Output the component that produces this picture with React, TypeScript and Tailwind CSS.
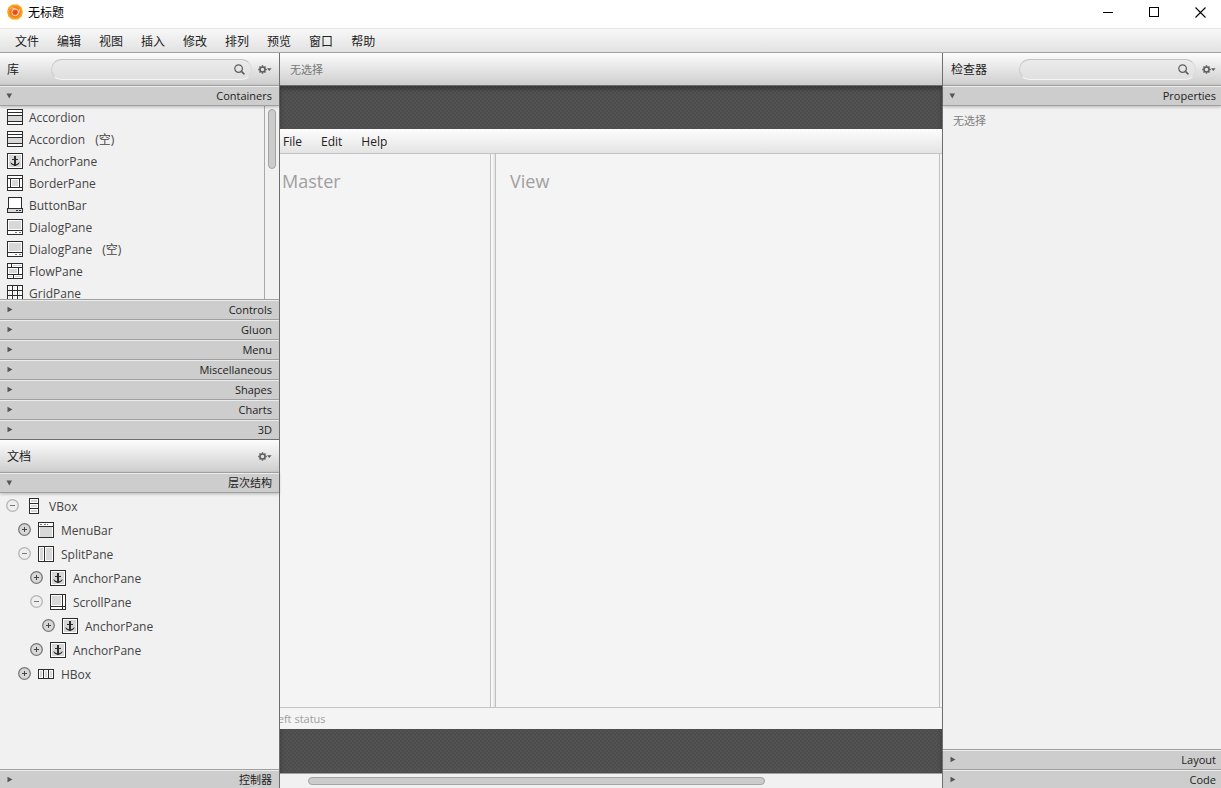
import type { ReactNode } from 'react';

type IconName =
  | 'accordion'
  | 'anchor'
  | 'border'
  | 'buttonbar'
  | 'dialog'
  | 'flow'
  | 'grid'
  | 'vbox'
  | 'hbox'
  | 'menubar'
  | 'split'
  | 'scroll';

const INK = '#2c2c2c';
const SHADE = '#d8d8d8';

function Frame({ children }: { children?: ReactNode }) {
  return (
    <>
      <rect x="0.5" y="0.5" width="15" height="15" fill="#ffffff" stroke={INK} />
      {children}
    </>
  );
}

const ICONS: Record<IconName, ReactNode> = {
  accordion: (
    <Frame>
      <rect x="1" y="7" width="14" height="5" fill={SHADE} />
      <path d="M1 3.5h14M1 6.5h14M1 12.5h14" stroke={INK} />
    </Frame>
  ),
  anchor: (
    <Frame>
      <rect x="2" y="2" width="12" height="12" fill={SHADE} />
      <rect x="7" y="3" width="2" height="10" fill={INK} />
      <path d="M5 6.5h6" stroke={INK} />
      <path
        d="M3.4 9C3.8 11.6 5.6 12.6 8 12.6S12.2 11.6 12.6 9L11 10.2C10.4 11 9.4 11.3 8 11.3S5.6 11 5 10.2Z"
        fill={INK}
        shapeRendering="geometricPrecision"
      />
    </Frame>
  ),
  border: (
    <Frame>
      <rect x="5" y="5" width="6" height="6" fill={SHADE} />
      <path d="M1 3.5h14M1 12.5h14M3.5 4v8M12.5 4v8" stroke={INK} />
    </Frame>
  ),
  buttonbar: (
    <>
      <rect x="1.5" y="0.5" width="13" height="11" fill="#ffffff" stroke={INK} />
      <rect x="0.5" y="11.5" width="15" height="4" fill={SHADE} stroke={INK} />
      <path d="M9 13.5h2M12 13.5h2" stroke={INK} />
    </>
  ),
  dialog: (
    <Frame>
      <rect x="2" y="2" width="12" height="8" fill={SHADE} />
      <path d="M1 11.5h14" stroke={INK} />
      <path d="M8 13.5h2M12 13.5h2" stroke="#777777" />
    </Frame>
  ),
  flow: (
    <Frame>
      <rect x="2" y="6" width="8" height="4" fill={SHADE} />
      <path d="M6 2.5h8M2 13.5h3M8 13.5h6" stroke={SHADE} />
      <path d="M1 4.5h14M1 11.5h14M4.5 1v3M11.5 5v6M6.5 12v3" stroke={INK} />
    </Frame>
  ),
  grid: (
    <Frame>
      <path d="M2.5 1v14M7.5 1v14M12.5 1v14" stroke="#e4e9e0" />
      <path d="M5.5 0v16M10.5 0v16M0 5.5h16M0 10.5h16" stroke={INK} />
    </Frame>
  ),
  vbox: (
    <>
      <rect x="3.5" y="0.5" width="9" height="15" fill="#ffffff" stroke={INK} />
      <path d="M5 3h6M5 8h6M5 13h6" stroke={SHADE} strokeWidth="2" />
      <path d="M4 5.5h8M4 10.5h8" stroke={INK} />
    </>
  ),
  hbox: (
    <>
      <rect x="0.5" y="3.5" width="15" height="9" fill="#ffffff" stroke={INK} />
      <path d="M3 5v6M8 5v6M13 5v6" stroke={SHADE} strokeWidth="2" />
      <path d="M5.5 4v8M10.5 4v8" stroke={INK} />
    </>
  ),
  menubar: (
    <Frame>
      <rect x="2" y="5" width="12" height="10" fill={SHADE} />
      <path d="M1 4.5h14" stroke={INK} />
      <path d="M2 2.5h2M6 2.5h2M9 2.5h1" stroke="#777777" />
    </Frame>
  ),
  split: (
    <Frame>
      <rect x="2" y="2" width="3" height="12" fill={SHADE} />
      <rect x="8" y="2" width="6" height="12" fill={SHADE} />
      <path d="M6.5 1v14" stroke={INK} />
    </Frame>
  ),
  scroll: (
    <Frame>
      <rect x="2" y="2" width="9" height="9" fill={SHADE} />
      <path d="M12.5 1v14M1 12.5h14" stroke={INK} />
    </Frame>
  ),
};

function NodeIcon({ name }: { name: IconName }) {
  return (
    <svg className="size-4 shrink-0" viewBox="0 0 16 16" shapeRendering="crispEdges" aria-hidden="true">
      {ICONS[name]}
    </svg>
  );
}

function AppLogo() {
  return (
    <svg className="size-4" viewBox="0 0 16 16" aria-hidden="true">
      <path d="M5.2 0.4H10.8L14.6 3.2L15.9 8L14.6 12.8L10.8 15.6H5.2L1.4 12.8L0.1 8L1.4 3.2Z" fill="#f9a61a" />
      <circle cx="8" cy="8" r="6" fill="#f58220" />
      <circle cx="8.2" cy="8.3" r="3.4" fill="#f26522" stroke="#fbd3b0" strokeWidth="1" />
      <path d="M3.4 4.2C5 3.6 7 4.2 9 5.6M12.6 5.2C12.4 7 11.8 9 10 11" fill="none" stroke="#fbd3b0" strokeWidth="1" />
      <circle cx="8.2" cy="8.3" r="1.9" fill="#ef4423" />
    </svg>
  );
}

function GearMenu({ label }: { label: string }) {
  return (
    <button type="button" aria-label={label} className="flex h-4 w-[14px] shrink-0 items-center">
      <svg className="h-[9px] w-[14px]" viewBox="0 0 14 9" aria-hidden="true">
        <circle cx="4.5" cy="4.5" r="2.5" fill="none" stroke="#5c5c5c" strokeWidth="1.5" />
        <path
          d="M4.5 0.2V1.8M4.5 7.2V8.8M0.2 4.5H1.8M7.2 4.5H8.8M1.5 1.5L2.5 2.5M6.5 6.5L7.5 7.5M1.5 7.5L2.5 6.5M6.5 2.5L7.5 1.5"
          stroke="#5c5c5c"
          strokeWidth="1.4"
        />
        <path d="M9 3.2H13.6L11.3 6Z" fill="#5c5c5c" />
      </svg>
    </button>
  );
}

function SearchBox({ label }: { label: string }) {
  return (
    <label className="flex h-[21px] min-w-0 flex-1 items-center rounded-full border border-t-[#c2c2c2] border-r-[#dadada] border-b-[#f4f4f4] border-l-[#cccccc] bg-linear-to-b from-[#ebebeb] to-[#dfdfdf] pr-[6px] pl-3">
      <input type="text" aria-label={label} className="min-w-0 flex-1 bg-transparent text-xs outline-none" />
      <svg className="size-[11px] shrink-0" viewBox="0 0 11 11" fill="none" stroke="#5c5c5c" aria-hidden="true">
        <circle cx="4.6" cy="4.6" r="3.8" strokeWidth="1.2" />
        <path d="M7.4 7.4L10.4 10.4" strokeWidth="1.5" />
      </svg>
    </label>
  );
}

const toolbar = 'flex h-8 shrink-0 items-center bg-linear-to-b from-[#fdfdfd] to-[#cecece]';

function SectionHeader({ title, open = false, inset = 'pr-[7px]' }: { title: string; open?: boolean; inset?: string }) {
  return (
    <button
      type="button"
      aria-expanded={open}
      className={`relative flex w-full shrink-0 items-center justify-between border-t border-t-[#a0a0a0] bg-[#cdcdcd] pl-[6px] text-[11px] leading-[18px] text-[#222222] ${inset} ${
        open ? 'h-[21px] border-b border-b-[#a0a0a0] shadow-[inset_0_1px_0_#ececec,0_1px_3px_rgba(0,0,0,0.25)]' : 'h-5 shadow-[inset_0_1px_0_#ececec]'
      }`}
    >
      <svg className="size-[7px]" viewBox="0 0 7 7" fill="#555555" aria-hidden="true">
        {open ? <path d="M0.5 1.5H6L3.3 6.5Z" /> : <path d="M1.5 0.8V6.2L6.5 3.5Z" />}
      </svg>
      <span>{title}</span>
    </button>
  );
}

const MENUS = ['文件', '编辑', '视图', '插入', '修改', '排列', '预览', '窗口', '帮助'];

const LIBRARY: { icon: IconName; label: string; empty?: boolean }[] = [
  { icon: 'accordion', label: 'Accordion' },
  { icon: 'accordion', label: 'Accordion', empty: true },
  { icon: 'anchor', label: 'AnchorPane' },
  { icon: 'border', label: 'BorderPane' },
  { icon: 'buttonbar', label: 'ButtonBar' },
  { icon: 'dialog', label: 'DialogPane' },
  { icon: 'dialog', label: 'DialogPane', empty: true },
  { icon: 'flow', label: 'FlowPane' },
  { icon: 'grid', label: 'GridPane' },
];

const LIBRARY_SECTIONS = ['Controls', 'Gluon', 'Menu', 'Miscellaneous', 'Shapes', 'Charts', '3D'];

const LEVEL = ['pl-[6px]', 'pl-[18px]', 'pl-[30px]', 'pl-[42px]'];

const TREE: { level: number; icon: IconName; label: string; open: boolean }[] = [
  { level: 0, icon: 'vbox', label: 'VBox', open: true },
  { level: 1, icon: 'menubar', label: 'MenuBar', open: false },
  { level: 1, icon: 'split', label: 'SplitPane', open: true },
  { level: 2, icon: 'anchor', label: 'AnchorPane', open: false },
  { level: 2, icon: 'scroll', label: 'ScrollPane', open: true },
  { level: 3, icon: 'anchor', label: 'AnchorPane', open: false },
  { level: 2, icon: 'anchor', label: 'AnchorPane', open: false },
  { level: 1, icon: 'hbox', label: 'HBox', open: false },
];

function TitleBar() {
  const control = 'flex w-[46px] items-center justify-center';
  return (
    <header className="flex h-7 shrink-0 bg-white">
      <div className="flex h-6 flex-1 items-center gap-[5px] pl-[7px] text-black">
        <AppLogo />
        <h1 className="pt-[2px]">无标题</h1>
      </div>
      <div className="-mr-[2px] flex h-6">
        <button type="button" aria-label="最小化" className={control}>
          <svg className="size-[11px]" viewBox="0 0 11 11" aria-hidden="true">
            <path d="M0 5.5H10" stroke="#000000" />
          </svg>
        </button>
        <button type="button" aria-label="最大化" className={control}>
          <svg className="size-[11px]" viewBox="0 0 11 11" aria-hidden="true">
            <path d="M0.5 0.5H9.5V9.5H0.5Z" fill="none" stroke="#000000" shapeRendering="crispEdges" />
          </svg>
        </button>
        <button type="button" aria-label="关闭" className={control}>
          <svg className="size-[11px]" viewBox="0 0 11 11" aria-hidden="true">
            <path d="M0.5 0.5L10.5 10.5M10.5 0.5L0.5 10.5" stroke="#000000" strokeWidth="1.1" />
          </svg>
        </button>
      </div>
    </header>
  );
}

function LibraryPanel() {
  return (
    <section className="flex min-h-0 flex-[387] basis-0 flex-col">
      <div className={`${toolbar} gap-[6px] pr-[7px] pl-[7px]`}>
        <h2 className="w-[38px] pt-[2px] text-[#222222]">库</h2>
        <SearchBox label="搜索库" />
        <GearMenu label="库选项" />
      </div>
      <SectionHeader title="Containers" open />
      <div className="flex min-h-0 flex-1 overflow-hidden">
        <ul className="flex-1">
          {LIBRARY.map((item, i) => (
            <li key={i} className="flex h-[22px] items-center gap-[6px] pl-[7px] whitespace-nowrap text-[#444444]">
              <NodeIcon name={item.icon} />
              <span className="pt-[2px]">{item.label}</span>
              {item.empty && <span className="pt-[2px] pl-1">(空)</span>}
            </li>
          ))}
        </ul>
        <div className="w-[15px] border-l border-[#a8a8a8] pt-[3px] pl-[3px]">
          <div className="h-[60px] w-2 rounded-full border border-[#a3a3a3] bg-[#cbcbcb]" />
        </div>
      </div>
      {LIBRARY_SECTIONS.map((s) => (
        <SectionHeader key={s} title={s} />
      ))}
    </section>
  );
}

function DocumentPanel() {
  return (
    <section className="flex min-h-0 flex-[349] basis-0 flex-col border-t border-[#6f6f6f]">
      <div className={`${toolbar} justify-between pr-[7px] pl-[7px]`}>
        <h2 className="pt-[2px] text-[#222222]">文档</h2>
        <GearMenu label="文档选项" />
      </div>
      <SectionHeader title="层次结构" open />
      <ul className="min-h-0 flex-1 overflow-hidden pt-px">
        {TREE.map((node, i) => (
          <li key={i} className={`flex h-6 items-center gap-[7px] text-[#444444] ${LEVEL[node.level]}`}>
            <button
              type="button"
              aria-label={`${node.label} 展开/折叠`}
              aria-expanded={node.open}
              className="flex h-[15px] w-[13px] items-start"
            >
              <svg className="size-[13px]" viewBox="0 0 13 13" aria-hidden="true">
                <circle
                  cx="6.5"
                  cy="6.5"
                  r="5.8"
                  fill={node.open ? '#eeeeee' : '#d8d8d8'}
                  stroke={node.open ? '#b4b4b4' : '#777777'}
                  strokeWidth="1.3"
                />
                <path d={node.open ? 'M4 6.5H9' : 'M4 6.5H9M6.5 4V9'} stroke={node.open ? '#777777' : '#444444'} />
              </svg>
            </button>
            <NodeIcon name={node.icon} />
            <span className="pt-[2px]">{node.label}</span>
          </li>
        ))}
      </ul>
      <SectionHeader title="控制器" />
    </section>
  );
}

function Editor() {
  return (
    <main className="flex min-w-0 flex-1 flex-col">
      <div className={`${toolbar} pt-[2px] pl-[10px] text-[11px] text-[#777777]`}>无选择</div>
      <div className="flex min-h-0 flex-1 flex-col border-t border-[#6f6f6f] bg-[#505050] bg-[repeating-conic-gradient(#4c4c4c_0_25%,#535353_0_50%)] bg-size-[4px_4px] pt-[43px] pb-11 shadow-[inset_0_3px_4px_rgba(0,0,0,0.3)]">
        <div className="flex min-h-0 flex-1 flex-col bg-[#f4f4f4]">
          <nav className="flex h-[25px] shrink-0 items-center gap-[19px] border-b border-[#c4c4c4] bg-linear-to-b from-[#fdfdfd] to-[#e4e4e4] pt-[2px] pl-[3px] text-[#222222]">
            <button type="button">File</button>
            <button type="button">Edit</button>
            <button type="button">Help</button>
          </nav>
          <div className="flex min-h-0 flex-1 text-lg text-[#a0a0a0]">
            <div className="w-[210px] pt-[14px] pl-[2px] leading-[26px]">Master</div>
            <div className="w-[6px] border-x border-[#c0c0c0] bg-linear-to-r from-[#ffffff] to-[#e2e2e2]" />
            <div className="flex-1 pt-[14px] pl-[14px] leading-[26px]">View</div>
            <div className="w-[3px] border-l border-[#c0c0c0]" />
          </div>
          <div className="flex h-[22px] shrink-0 items-center overflow-hidden border-t border-[#c4c4c4] pt-[2px] text-[11px] text-[#a0a0a0]">
            <span className="-ml-2">Left status</span>
          </div>
        </div>
      </div>
      <div className="h-4 shrink-0 border-t border-[#a0a0a0] bg-[#f1f1f1] pt-[3px]">
        <div className="ml-7 h-2 w-[69%] rounded-full border border-[#a3a3a3] bg-[#cbcbcb]" />
      </div>
    </main>
  );
}

function Inspector() {
  return (
    <aside className="flex w-[279px] shrink-0 flex-col border-l border-[#6f6f6f] bg-[#f1f1f1]">
      <div className={`${toolbar} gap-[6px] pr-[5px] pl-2`}>
        <h2 className="w-[62px] pt-[2px] text-[#222222]">检查器</h2>
        <SearchBox label="搜索属性" />
        <GearMenu label="检查器选项" />
      </div>
      <SectionHeader title="Properties" open inset="pr-[5px]" />
      <p className="flex-1 pt-[6px] pl-[10px] text-[11px] leading-[18px] text-[#808080]">无选择</p>
      <SectionHeader title="Layout" inset="pr-[5px]" />
      <SectionHeader title="Code" inset="pr-[5px]" />
    </aside>
  );
}

export default function App() {
  return (
    <div className="flex h-screen flex-col overflow-hidden bg-[#f1f1f1] font-['Open_Sans','Noto_Sans_CJK_SC',sans-serif] text-xs">
      <TitleBar />
      <nav className="flex h-[25px] shrink-0 items-center border-y border-t-[#e6e6e6] border-b-[#a0a0a0] bg-linear-to-b from-[#f8f8f8] to-[#e2e2e2] pt-[2px] pl-[6px] text-[#222222]">
        {MENUS.map((m) => (
          <button key={m} type="button" className="px-[9px]">
            {m}
          </button>
        ))}
      </nav>
      <div className="-mb-px flex min-h-0 flex-1">
        <aside className="flex w-[280px] shrink-0 flex-col border-r border-[#6f6f6f] bg-[#f1f1f1]">
          <LibraryPanel />
          <DocumentPanel />
        </aside>
        <Editor />
        <Inspector />
      </div>
    </div>
  );
}
